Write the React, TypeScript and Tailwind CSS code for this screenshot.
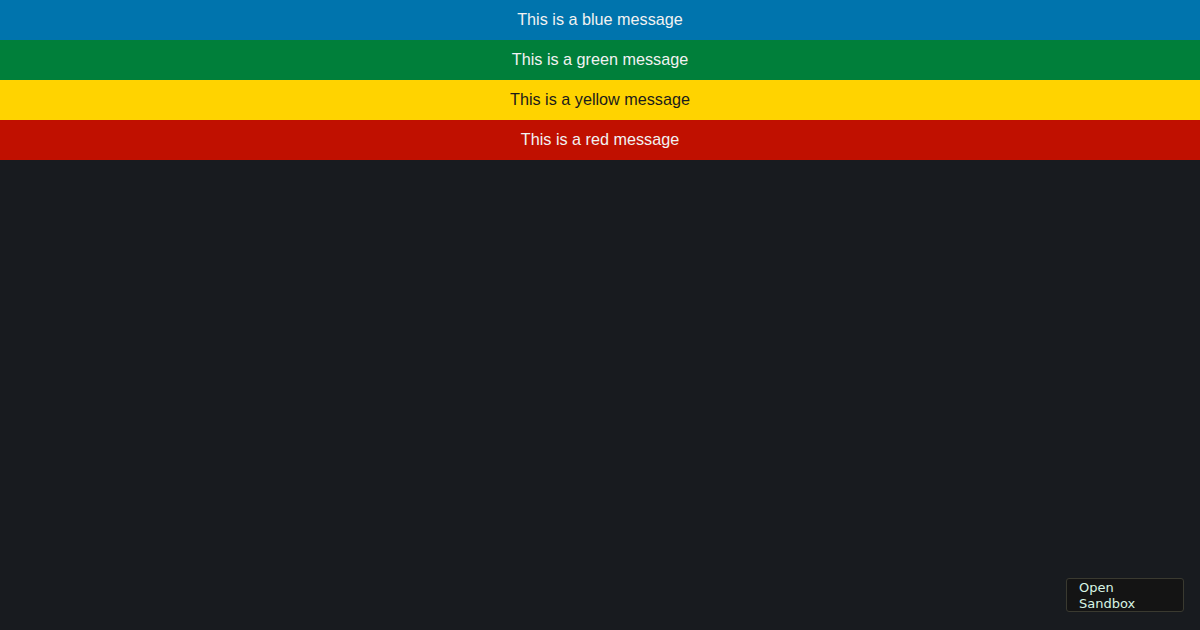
import React from 'react';

const messages = [
  { text: 'This is a blue message', className: 'bg-[#0074ad] text-[#f2f2f2]' },
  { text: 'This is a green message', className: 'bg-[#007f3a] text-[#f2f2f2]' },
  { text: 'This is a yellow message', className: 'bg-[#ffd300] text-[#1b1b1b]' },
  { text: 'This is a red message', className: 'bg-[#c01000] text-[#f2f2f2]' },
];

export default function App() {
  return (
    <div className="relative flex h-[630px] w-full flex-col bg-[#181b1f] font-['Liberation_Sans',Arial,sans-serif]">
      {/* Message banners */}
      {messages.map((m) => (
        <div key={m.text} className={`flex h-10 items-center justify-center pb-[2px] text-[16.2px] leading-[18px] ${m.className}`}>
          {m.text}
        </div>
      ))}

      {/* Sandbox button */}
      <button className="absolute bottom-[18px] right-[16px] h-[34px] w-[118px] rounded-[3px] border border-[#3a3a30] bg-[#141414] px-3 pt-px pb-0 text-left font-['DejaVu_Sans',sans-serif] text-[13px] leading-4 text-[#d8f5e4]">
        Open Sandbox
      </button>
    </div>
  );
}
